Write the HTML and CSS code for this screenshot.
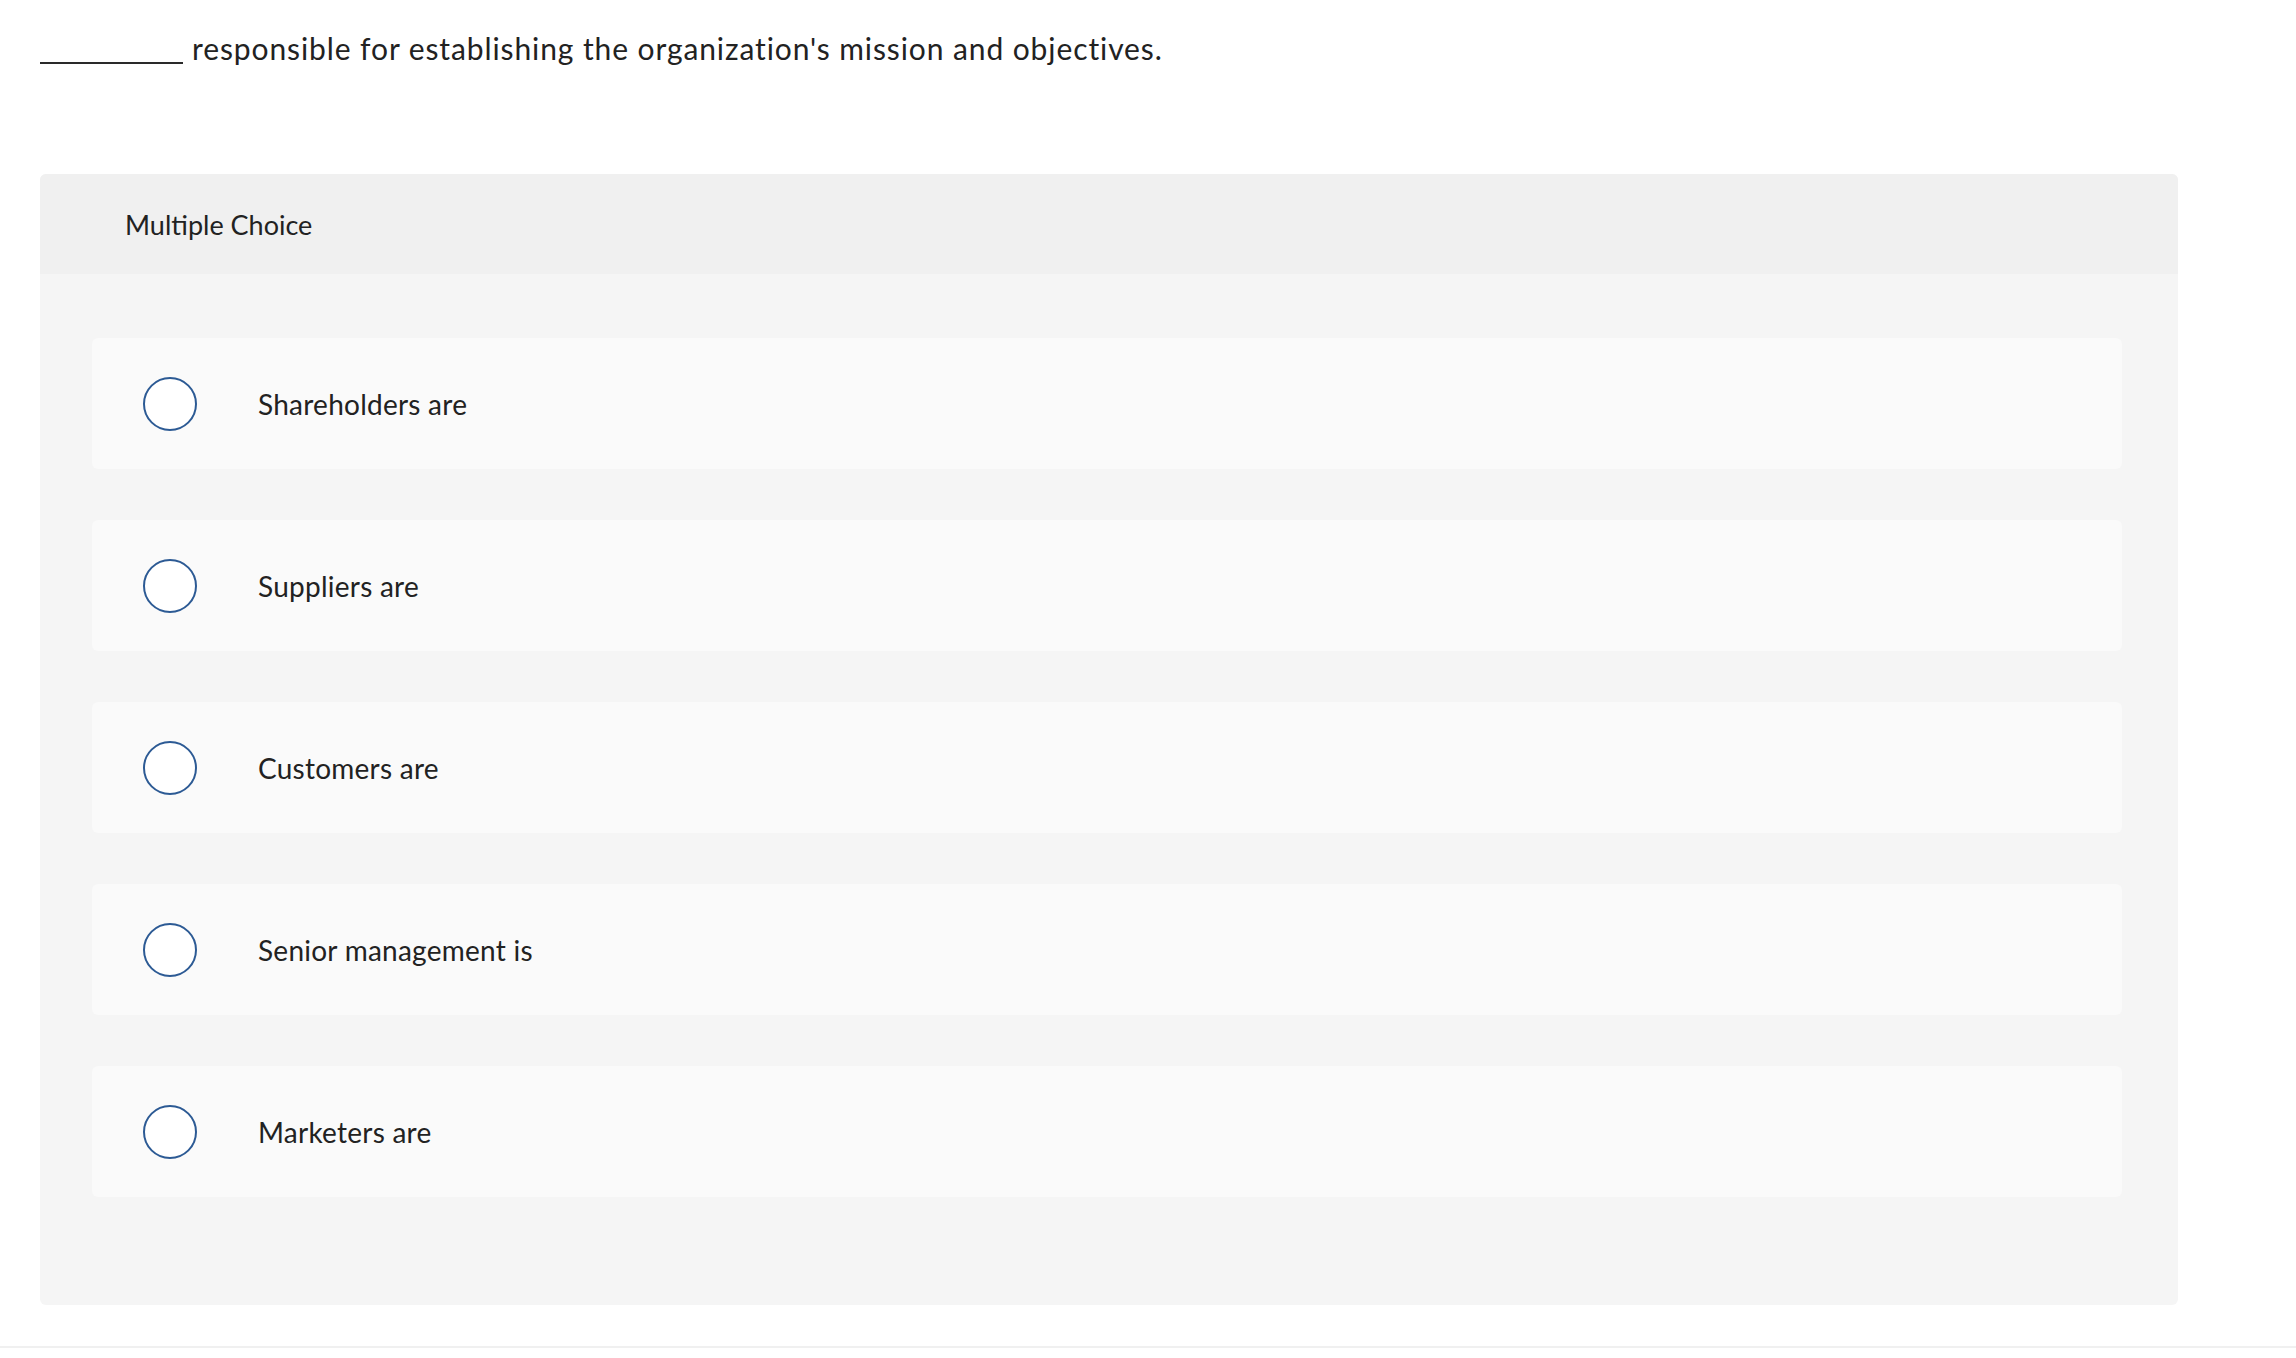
FILE: index.html
```html
<!DOCTYPE html>
<html lang="en">
<head>
<meta charset="utf-8">
<title>Multiple Choice</title>
<link rel="stylesheet" href="styles.css">
</head>
<body>
<main class="page">
  <p class="question"><span class="blank"></span>responsible for establishing the organization's mission and objectives.</p>
  <section class="panel">
    <div class="panel-head">Multiple Choice</div>
    <div class="panel-body">
      <label class="option"><span class="radio"></span><span class="option-text">Shareholders are</span></label>
      <label class="option"><span class="radio"></span><span class="option-text">Suppliers are</span></label>
      <label class="option"><span class="radio"></span><span class="option-text">Customers are</span></label>
      <label class="option"><span class="radio"></span><span class="option-text">Senior management is</span></label>
      <label class="option"><span class="radio"></span><span class="option-text">Marketers are</span></label>
    </div>
  </section>
  <div class="rule"></div>
</main>
</body>
</html>
```

FILE: styles.css
```css
html, body {
  margin: 0;
  padding: 0;
  background: #ffffff;
}

.page {
  font-family: Lato, "Open Sans", "Liberation Sans", sans-serif;
  color: #222222;
}

.question {
  margin: 0;
  padding: 31px 40px 0;
  height: 174px;
  box-sizing: border-box;
  font-size: 30px;
  line-height: 35px;
  letter-spacing: 0.9px;
}

.blank {
  display: inline-block;
  width: 143px;
  height: 2px;
  background: #2a2a2a;
  vertical-align: -4px;
  margin-right: 9px;
}

.panel {
  margin-left: 40px;
  width: 2138px;
  background: #f5f5f5;
  border-radius: 6px;
}

.panel-head {
  height: 100px;
  display: flex;
  align-items: center;
  padding-left: 85px;
  background: #f0f0f0;
  border-radius: 6px 6px 0 0;
  font-size: 27px;
}

.panel-body {
  display: flex;
  flex-direction: column;
  gap: 51px;
  padding: 64px 56px 108px 52px;
}

.option {
  height: 131px;
  display: flex;
  align-items: center;
  padding-left: 51px;
  gap: 61px;
  background: #fafafa;
  border-radius: 6px;
  font-size: 28px;
  letter-spacing: 0.25px;
}

.radio {
  width: 54px;
  height: 54px;
  box-sizing: border-box;
  border: 2px solid #2c5a94;
  border-radius: 50%;
  background: #ffffff;
  flex: none;
}

.rule {
  margin-top: 41px;
  height: 2px;
  background: #f0f0f0;
}
```
